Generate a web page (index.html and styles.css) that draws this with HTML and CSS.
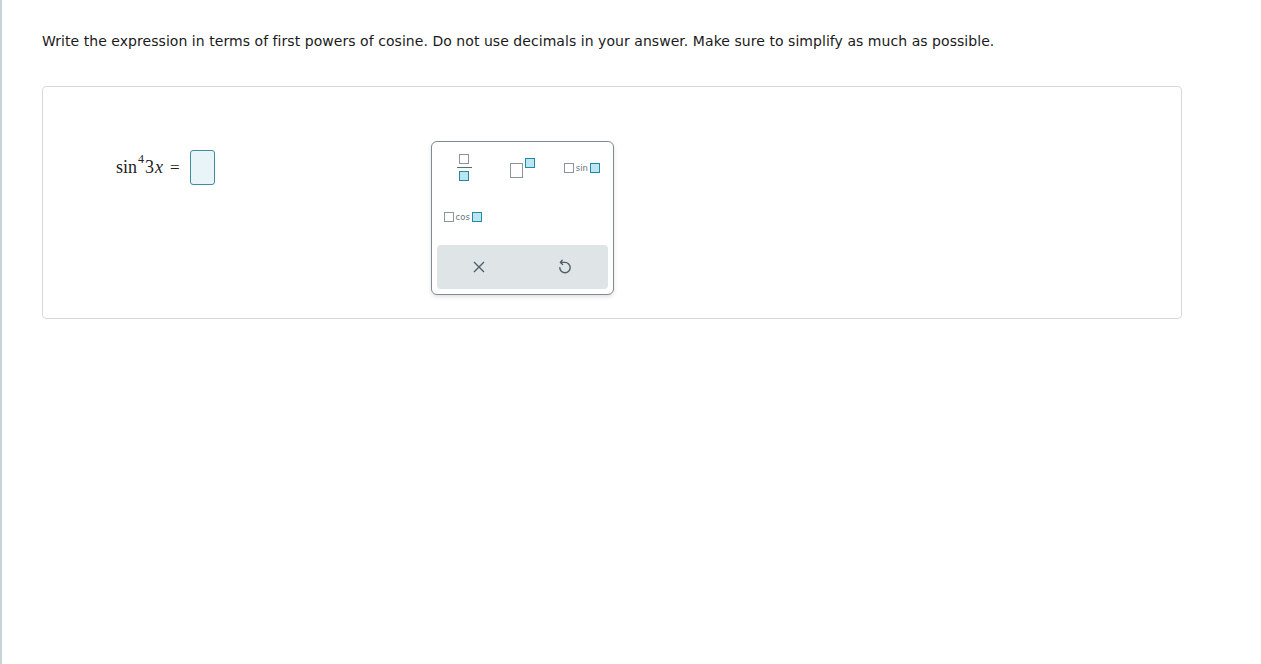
FILE: index.html
```html
<!DOCTYPE html>
<html lang="en">
<head>
  <meta charset="UTF-8">
  <title>Trig expression</title>
  <link rel="stylesheet" href="styles.css">
</head>
<body>
  <div class="page">
    <p class="prompt">Write the expression in terms of first powers of cosine. Do not use decimals in your answer. Make sure to simplify as much as possible.</p>

    <div class="answer-box">
      <div class="math">
        <span class="fn">sin</span><sup class="pow">4</sup><span class="num">3</span><span class="var">x</span>
        <span class="eq">=</span>
        <span class="slot"></span>
      </div>

      <div class="palette">
        <div class="keys">
          <button class="key" title="fraction">
            <span class="frac">
              <span class="sq"></span>
              <span class="bar"></span>
              <span class="sq on"></span>
            </span>
          </button>
          <button class="key" title="power">
            <span class="power">
              <span class="sq big"></span>
              <span class="sq on"></span>
            </span>
          </button>
          <button class="key" title="sine">
            <span class="trig"><span class="sq"></span><span class="lbl">sin</span><span class="sq on"></span></span>
          </button>
          <button class="key" title="cosine">
            <span class="trig"><span class="sq"></span><span class="lbl">cos</span><span class="sq on"></span></span>
          </button>
        </div>
        <div class="actions">
          <button class="act" title="clear">
            <svg width="14" height="14" viewBox="0 0 14 14"><path d="M2 2 L12 12 M12 2 L2 12" stroke="#4f5f68" stroke-width="1.4" fill="none"/></svg>
          </button>
          <button class="act" title="undo">
            <svg width="14" height="16" viewBox="0 0 14 16"><path d="M4.2 1.2 L2.4 3.4 L4.6 5.4 M2.6 3.4 H7 A5.2 5.2 0 1 1 1.8 8.6" stroke="#4f5f68" stroke-width="1.4" fill="none" stroke-linecap="round" stroke-linejoin="round"/></svg>
          </button>
        </div>
      </div>
    </div>
  </div>
</body>
</html>
```

FILE: styles.css
```css
* { box-sizing: border-box; }

html, body {
  height: 100%;
}

body {
  margin: 0;
  background: #fff;
  border-left: 2px solid #c8d2d8;
  font-family: Verdana, 'DejaVu Sans', sans-serif;
  color: #1a1a1a;
}

.page {
  padding: 31px 0 0 40px;
  width: 1180px;
}

.prompt {
  margin: 0 0 35px 0;
  font-size: 14px;
  line-height: 20px;
  letter-spacing: 0.05px;
}

.answer-box {
  border: 1px solid #d6d9db;
  border-radius: 4px;
  padding: 54px 0 23px 73px;
  display: flex;
  align-items: flex-start;
}

/* math row */
.math {
  display: flex;
  align-items: center;
  margin-top: 9px;
  height: 35px;
  font-family: 'Liberation Serif', 'Times New Roman', serif;
  font-size: 18px;
  color: #222;
}

.pow {
  font-size: 12px;
  position: relative;
  top: -8px;
  margin: 0 1px 0 1px;
  vertical-align: baseline;
}

.var {
  font-style: italic;
  margin-left: 1px;
}

.eq {
  margin: 0 10px 0 7px;
  font-size: 17px;
}

.slot {
  width: 25px;
  height: 35px;
  border: 1px solid #3f8d9c;
  border-radius: 3px;
  background: #e8f4f8;
}

/* palette */
.palette {
  margin-left: 216px;
  width: 183px;
  border: 1px solid #7d8b92;
  border-radius: 6px;
  background: #fff;
  box-shadow: 0 2px 4px rgba(0, 0, 0, 0.12);
  padding: 1px 5px 5px 4px;
}

.keys {
  display: grid;
  grid-template-columns: repeat(3, 1fr);
  grid-auto-rows: 49px;
  margin-bottom: 4px;
}

.key {
  border: none;
  background: transparent;
  padding: 0;
  display: flex;
  align-items: center;
  justify-content: center;
  cursor: pointer;
}

.sq {
  display: block;
  width: 10px;
  height: 10px;
  border: 1.5px solid #8b969c;
  background: #fff;
}

.sq.on {
  border-color: #1f8ba3;
  background: #bde5f1;
}

.frac {
  display: flex;
  flex-direction: column;
  align-items: center;
  gap: 2px;
}

.frac .bar {
  width: 15px;
  height: 1.5px;
  background: #5d6a71;
  margin: 1px 0;
}

.power {
  display: flex;
  align-items: flex-start;
  gap: 2px;
  margin-left: 2px;
}

.power .big {
  width: 13px;
  height: 15px;
  margin-top: 5px;
}

.trig {
  display: flex;
  align-items: center;
  gap: 2px;
}

.trig .lbl {
  font-family: 'DejaVu Sans', sans-serif;
  font-size: 8.5px;
  color: #6a767c;
}

.key:nth-child(3) .trig {
  margin-left: 6px;
}

.key:nth-child(4) .trig {
  margin-left: -3px;
}

.actions {
  display: flex;
  background: #dfe4e7;
  border-radius: 4px;
  height: 44px;
  margin-left: 1px;
}

.act {
  flex: 1;
  border: none;
  background: transparent;
  display: flex;
  align-items: center;
  justify-content: center;
  cursor: pointer;
  padding: 0;
}
```
